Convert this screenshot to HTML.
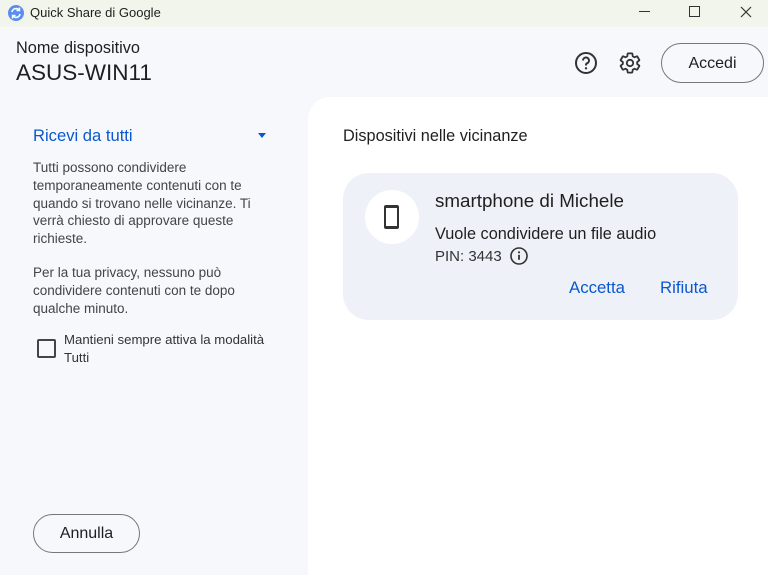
<!DOCTYPE html>
<html><head><meta charset="utf-8"><style>
*{margin:0;padding:0;box-sizing:border-box}
body{width:768px;height:575px;overflow:hidden;background:#f6f8fc;font-family:"Liberation Sans",sans-serif;color:#1f1f1f;position:relative}
.a{position:absolute;white-space:nowrap}
.title{left:0;top:0;width:768px;height:27px;background:#f2f5ec}
.right{left:308px;top:97px;width:460px;height:478px;background:#fff;border-top-left-radius:22px}
.card{left:343px;top:173px;width:395px;height:147px;background:#eef1f7;border-radius:26px}
.p{font-size:13.5px;color:#444;line-height:17.8px;white-space:normal}
.btn{border:1px solid #777;border-radius:22px;font-size:16px;display:flex;align-items:center;justify-content:center}
</style></head><body>
<div class="a title"></div>
<svg class="a" style="left:7px;top:4px" width="18" height="18" viewBox="0 0 18 18"><circle cx="9" cy="9" r="8" fill="#5b8def"/><path d="M5 8a4 4 0 0 1 7-2M13 10a4 4 0 0 1-7 2" stroke="#fff" stroke-width="1.6" fill="none"/><path d="M12.5 3.5v3h-3M5.5 14.5v-3h3" stroke="#fff" stroke-width="1.4" fill="none"/></svg>
<div class="a" style="left:30px;top:5px;font-size:13px">Quick Share di Google</div>
<div class="a" style="left:639px;top:11px;width:11px;height:1px;background:#333"></div>
<div class="a" style="left:689px;top:6px;width:11px;height:11px;border:1.2px solid #333"></div>
<svg class="a" style="left:740px;top:6px" width="12" height="12"><path d="M1 1L11 11M11 1L1 11" stroke="#333" stroke-width="1.2"/></svg>
<div class="a" style="left:16px;top:39px;font-size:16.3px">Nome dispositivo</div>
<div class="a" style="left:16px;top:60px;font-size:22.5px">ASUS-WIN11</div>
<svg class="a" style="left:574px;top:51px" width="24" height="24" viewBox="0 0 24 24"><circle cx="12" cy="12" r="10" stroke="#333" stroke-width="2" fill="none"/><path d="M9 9.5a3 3 0 1 1 4.2 2.7c-.8.4-1.2 1-1.2 1.8v.5" stroke="#333" stroke-width="2" fill="none"/><circle cx="12" cy="17.3" r="1.2" fill="#333"/></svg>
<svg class="a" style="left:618px;top:51px" width="24" height="24" viewBox="0 0 24 24"><path fill="none" stroke="#333" stroke-width="1.8" stroke-linejoin="round" d="M19.14 12.94c.04-.3.06-.61.06-.94 0-.32-.02-.64-.07-.94l2.03-1.58a.49.49 0 0 0 .12-.61l-1.92-3.32a.49.49 0 0 0-.59-.22l-2.39.96c-.5-.38-1.03-.7-1.62-.94l-.36-2.54a.48.48 0 0 0-.48-.41h-3.84c-.24 0-.43.17-.47.41l-.36 2.54c-.59.24-1.130.57-1.62.94l-2.39-.96a.49.49 0 0 0-.59.22L2.74 8.87c-.12.21-.08.47.12.61l2.03 1.58c-.05.3-.09.63-.09.94s.02.64.07.94l-2.03 1.58a.49.49 0 0 0-.12.61l1.92 3.32c.12.22.37.29.59.22l2.39-.96c.5.38 1.03.7 1.62.94l.36 2.54c.05.24.24.41.48.41h3.84c.24 0 .44-.17.47-.41l.36-2.54c.59-.24 1.13-.56 1.62-.94l2.39.96c.22.08.47 0 .59-.22l1.92-3.32c.12-.22.07-.47-.12-.61l-2.01-1.58z"/><circle cx="12" cy="12" r="3.2" fill="none" stroke="#333" stroke-width="1.8"/></svg>
<div class="a btn" style="left:661px;top:43px;width:103px;height:40px;padding-top:2px">Accedi</div>
<div class="a right"></div>
<div class="a" style="left:33px;top:126px;font-size:16.6px;color:#0b57d0">Ricevi da tutti</div>
<div class="a" style="left:258px;top:133px;width:0;height:0;border-left:4.5px solid transparent;border-right:4.5px solid transparent;border-top:5px solid #0b57d0"></div>
<div class="a p" style="left:33px;top:159px;width:245px">Tutti possono condividere temporaneamente contenuti con te quando si trovano nelle vicinanze. Ti verrà chiesto di approvare queste richieste.</div>
<div class="a p" style="left:33px;top:264px;width:245px">Per la tua privacy, nessuno può condividere contenuti con te dopo qualche minuto.</div>
<div class="a" style="left:37px;top:339px;width:19px;height:19px;border:2px solid #444;border-radius:2px"></div>
<div class="a p" style="left:64px;top:331px;width:210px;font-size:13.2px;color:#333">Mantieni sempre attiva la modalità Tutti</div>
<div class="a btn" style="left:33px;top:514px;width:107px;height:39px">Annulla</div>
<div class="a" style="left:343px;top:127px;font-size:16.3px">Dispositivi nelle vicinanze</div>
<div class="a card"></div>
<div class="a" style="left:365px;top:190px;width:54px;height:54px;border-radius:50%;background:#fff"></div>
<div class="a" style="left:384px;top:205px;width:15px;height:24px;border:2px solid #333;border-radius:2px;border-top-width:3px;border-bottom-width:3px"></div>
<div class="a" style="left:435px;top:190px;font-size:18.8px">smartphone di Michele</div>
<div class="a" style="left:435px;top:225px;font-size:16.3px">Vuole condividere un file audio</div>
<div class="a" style="left:435px;top:248px;font-size:15px;color:#333">PIN: 3443</div>
<svg class="a" style="left:509px;top:246px" width="20" height="20" viewBox="0 0 20 20"><circle cx="10" cy="10" r="8" stroke="#333" stroke-width="1.6" fill="none"/><circle cx="10" cy="6.3" r="1.1" fill="#333"/><path d="M10 8.8v5" stroke="#333" stroke-width="1.8"/></svg>
<div class="a" style="left:569px;top:278px;font-size:16.8px;color:#0b57d0">Accetta</div>
<div class="a" style="left:660px;top:278px;font-size:16.8px;color:#0b57d0">Rifiuta</div>
</body></html>
